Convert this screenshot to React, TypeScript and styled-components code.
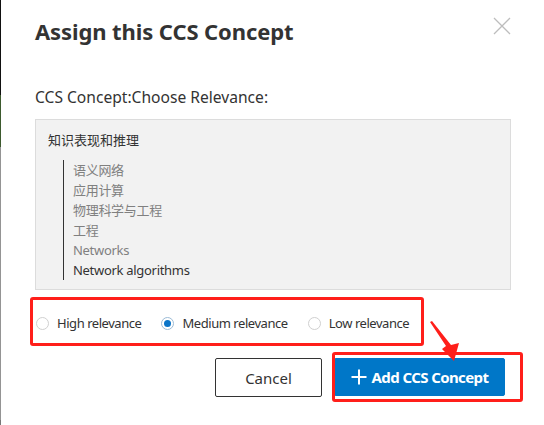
import React from 'react';
import styled, { createGlobalStyle } from 'styled-components';

const GlobalStyle = createGlobalStyle`
  html, body {
    margin: 0;
    padding: 0;
    background: #fff;
  }
  body {
    font-family: 'Noto Sans', 'Open Sans', 'Noto Sans CJK SC', sans-serif;
    color: #333;
  }
`;

const Page = styled.div`
  position: relative;
  display: flex;
  width: 544px;
  height: 425px;
  overflow: hidden;
`;

// sliver of the page behind the modal
const Backdrop = styled.div`
  width: 1px;
  flex: none;
  background: linear-gradient(
    to bottom,
    #111 0 95px,
    #3d5a2e 95px 147px,
    #949494 147px 420px,
    #777 420px
  );
`;

const Dialog = styled.div`
  flex: 1;
  padding: 0 33px 0 34px;
  display: flex;
  flex-direction: column;
`;

const Header = styled.div`
  display: flex;
  justify-content: space-between;
  align-items: flex-start;
  padding-top: 16px;
`;

const Title = styled.h2`
  margin: 0;
  font-size: 22px;
  line-height: 30px;
  font-weight: 700;
  letter-spacing: -0.1px;
  color: #333;
`;

const Close = styled.button`
  border: 0;
  background: none;
  padding: 0;
  margin-top: 1px;
  width: 18px;
  height: 18px;
  cursor: pointer;
  svg {
    display: block;
  }
`;

const Label = styled.div`
  margin-top: 41px;
  font-size: 15.6px;
  line-height: 20px;
  color: #333;
`;

const Tree = styled.div`
  margin-top: 12px;
  background: #f2f2f2;
  border: 1px solid #dcdcdc;
  padding: 10px 12px 9px;
  font-size: 13px;
  line-height: 20px;
`;

const Parent = styled.div`
  color: #333;
`;

const Children = styled.div`
  margin: 10px 0 0 15px;
  padding-left: 9px;
  border-left: 1px solid #333;
`;

const Child = styled.div<{ $active?: boolean }>`
  letter-spacing: -0.3px;
  color: ${(p) => (p.$active ? '#333' : '#808080')};
`;

const RadioRow = styled.div`
  display: flex;
  align-items: center;
  gap: 20px;
  margin-top: 24px;
  padding-left: 1px;
  font-size: 13px;
  letter-spacing: -0.45px;
`;

const RadioLabel = styled.label`
  display: flex;
  align-items: center;
  gap: 8px;
  color: #333;
  cursor: pointer;
`;

const RadioDot = styled.span<{ $checked?: boolean }>`
  box-sizing: border-box;
  width: 13px;
  height: 13px;
  border-radius: 50%;
  background: #fff;
  border: 1px solid ${(p) => (p.$checked ? '#9bbbd6' : '#d0d0d0')};
  display: flex;
  align-items: center;
  justify-content: center;
  &::after {
    content: '';
    width: 7px;
    height: 7px;
    border-radius: 50%;
    background: ${(p) => (p.$checked ? '#0a74c8' : 'transparent')};
  }
`;

const Actions = styled.div`
  display: flex;
  justify-content: flex-end;
  align-items: flex-start;
  gap: 12px;
  margin-top: 26px;
  padding-right: 6px;
`;

const Button = styled.button<{ $primary?: boolean }>`
  box-sizing: border-box;
  font-family: inherit;
  font-size: 15px;
  border-radius: 2px;
  cursor: pointer;
  display: flex;
  align-items: center;
  justify-content: center;
  gap: 5px;
  height: ${(p) => (p.$primary ? '38px' : '39px')};
  padding: 0;
  border: 1px solid ${(p) => (p.$primary ? '#0077c8' : '#333')};
  background: ${(p) => (p.$primary ? '#0077c8' : '#fff')};
  color: ${(p) => (p.$primary ? '#fff' : '#333')};
  font-weight: ${(p) => (p.$primary ? 700 : 400)};
  letter-spacing: ${(p) => (p.$primary ? '-0.6px' : '0')};
  width: ${(p) => (p.$primary ? '171px' : '107px')};
`;

// red annotation marks drawn over the screenshot
const Mark = styled.div`
  position: absolute;
  box-sizing: border-box;
  border: 3px solid #ff1f1a;
  border-radius: 3px;
  pointer-events: none;
`;

const Arrow = styled.svg`
  position: absolute;
  left: 0;
  top: 0;
  pointer-events: none;
`;

const relevance = ['High relevance', 'Medium relevance', 'Low relevance'];
const children = ['语义网络', '应用计算', '物理科学与工程', '工程', 'Networks', 'Network algorithms'];

export default function App() {
  const [picked, setPicked] = React.useState(1);
  return (
    <>
      <GlobalStyle />
      <Page>
        <Backdrop />
        <Dialog>
          <Header>
            <Title>Assign this CCS Concept</Title>
            <Close aria-label="close">
              <svg width="18" height="18" viewBox="0 0 18 18">
                <path d="M1 1L17 17M17 1L1 17" stroke="#bdbdbd" strokeWidth="1.3" />
              </svg>
            </Close>
          </Header>
          <Label>CCS Concept:Choose Relevance:</Label>
          <Tree>
            <Parent>知识表现和推理</Parent>
            <Children>
              {children.map((c, i) => (
                <Child key={c} $active={i === children.length - 1}>
                  {c}
                </Child>
              ))}
            </Children>
          </Tree>
          <RadioRow>
            {relevance.map((r, i) => (
              <RadioLabel key={r} onClick={() => setPicked(i)}>
                <RadioDot $checked={picked === i} />
                {r}
              </RadioLabel>
            ))}
          </RadioRow>
          <Actions>
            <Button>Cancel</Button>
            <Button $primary>
              <svg width="16" height="16" viewBox="0 0 16 16">
                <path d="M8 0.5V15.5M0.5 8H15.5" stroke="#fff" strokeWidth="2" />
              </svg>
              Add CCS Concept
            </Button>
          </Actions>
        </Dialog>
        <Mark style={{ left: 30, top: 297, width: 394, height: 49 }} />
        <Mark style={{ left: 332, top: 352, width: 191, height: 50 }} />
        <Arrow width="544" height="425" viewBox="0 0 544 425">
          <polygon points="430,322 446,346 442,349 454,361 459,343 451,345 432,321" fill="#ff1f1a" />
        </Arrow>
      </Page>
    </>
  );
}
